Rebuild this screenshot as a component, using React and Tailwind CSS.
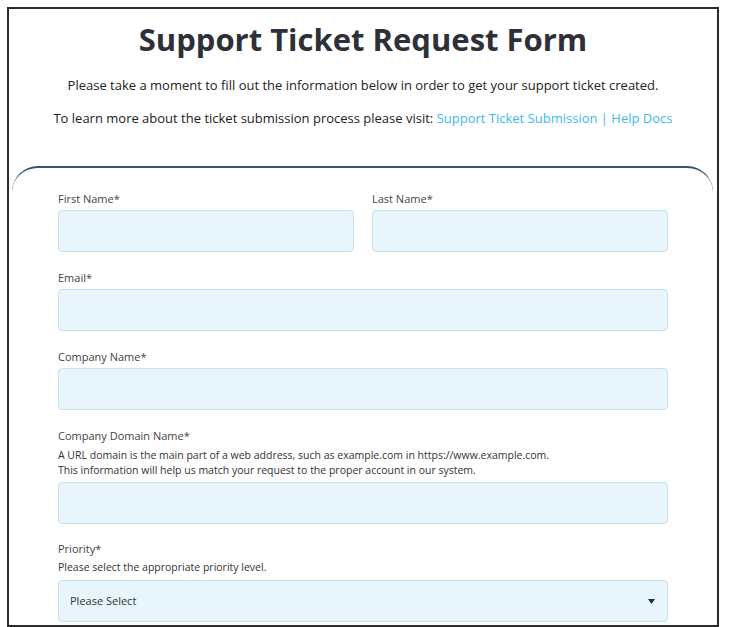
const font = { fontFamily: '"Open Sans", "Noto Sans", sans-serif' };

function Field({ label, help, className = "" }) {
  return (
    <div className={className}>
      <label className="block text-[11px] leading-4 text-[#444]">{label}</label>
      {help && (
        <div className="mt-[4px] text-[10.5px] leading-[15px] text-[#333]">
          {help.map((h) => (
            <p key={h}>{h}</p>
          ))}
        </div>
      )}
      <input
        type="text"
        className={`block w-full h-[42px] rounded-[4px] border border-[#c9e0ef] bg-[#e8f5fc] ${help ? "mt-[4px]" : "mt-[3px]"}`}
      />
    </div>
  );
}

export default function App() {
  return (
    <div className="w-[738px] h-[627px] bg-white overflow-hidden" style={font}>
      <div className="ml-[7px] mt-[7px] w-[712px] h-[620px] border-2 border-[#2b2b2b] overflow-hidden">
        <h1 className="mt-[12px] text-center text-[31px] leading-9 font-bold text-[#2d3038]">
          Support Ticket Request Form
        </h1>
        <p className="mt-[18px] text-center text-[13px] leading-5 text-[#222]">
          Please take a moment to fill out the information below in order to get your support ticket created.
        </p>
        <p className="mt-[13px] text-center text-[13px] leading-5 text-[#222]">
          To learn more about the ticket submission process please visit:{" "}
          <a className="text-[#3db9ef]">Support Ticket Submission | Help Docs</a>
        </p>
        <div className="mt-[38px] ml-[3px] mr-[4px] rounded-t-[26px] border-t-2 border-[#2e5479] pl-[46px] pr-[45px] pt-[23px]">
          <div className="grid grid-cols-2 gap-[18px]">
            <Field label="First Name*" />
            <Field label="Last Name*" />
          </div>
          <Field label="Email*" className="mt-[18px]" />
          <Field label="Company Name*" className="mt-[18px]" />
          <Field
            label="Company Domain Name*"
            className="mt-[18px]"
            help={[
              "A URL domain is the main part of a web address, such as example.com in https://www.example.com.",
              "This information will help us match your request to the proper account in our system.",
            ]}
          />
          <div className="mt-[17px]">
            <label className="block text-[11px] leading-4 text-[#444]">Priority*</label>
            <p className="mt-[3px] text-[10.5px] leading-[15px] text-[#333]">
              Please select the appropriate priority level.
            </p>
            <div className="mt-[5px] flex h-[42px] items-center justify-between rounded-[4px] border border-[#c9e0ef] bg-[#e8f5fc] pl-[11px] pr-[12px]">
              <span className="text-[11px] text-[#333]">Please Select</span>
              <svg width="7" height="5" viewBox="0 0 7 5">
                <path d="M0 0h7L3.5 5z" fill="#1f2f45" />
              </svg>
            </div>
          </div>
        </div>
      </div>
    </div>
  );
}
